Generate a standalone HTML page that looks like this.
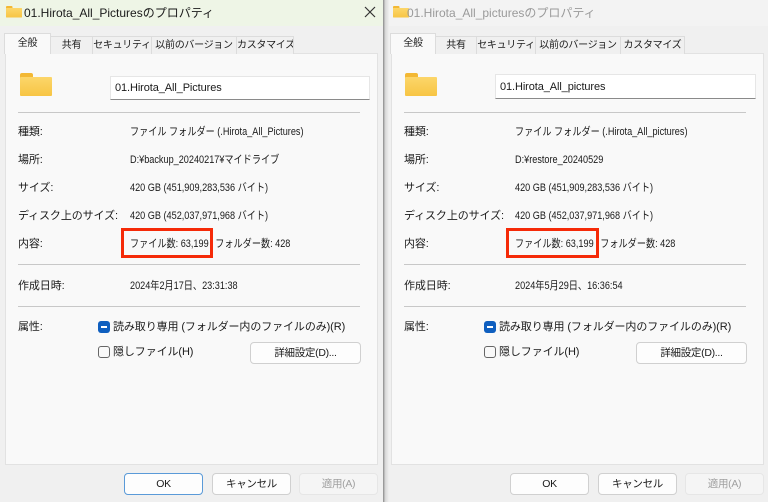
<!DOCTYPE html><html><head><meta charset="utf-8"><style>
*{box-sizing:border-box;margin:0;padding:0}
body{width:768px;height:502px;overflow:hidden;background:#f0f0f0;position:relative;font-family:"Liberation Sans","Noto Sans CJK JP",sans-serif;font-size:10px;letter-spacing:-0.3px;color:#1a1a1a}
.win{position:absolute;top:0;height:502px;background:#f0f0f0;overflow:hidden}
.a{position:absolute;white-space:nowrap;line-height:14px}
.l{font-size:11px;letter-spacing:-0.1px}
.v{font-size:11px;letter-spacing:0;transform:scaleX(0.83);transform-origin:0 0}
.title{position:absolute;left:0;top:0;right:0;height:26px}
.tab{position:absolute;top:36px;height:18px;border:1px solid #dcdcdc;border-bottom:none;background:#f0f0f0;text-align:center;line-height:17px;font-size:10px;white-space:nowrap;overflow:hidden;letter-spacing:-0.3px}
.tab.act{top:33px;height:21px;background:#f9f9f9;z-index:2;line-height:20px}
.panel{position:absolute;left:5px;top:53px;width:373px;height:412px;background:#f9f9f9;border:1px solid #e2e2e2}
.sep{position:absolute;left:18px;width:342px;height:1px;background:#c8c8c8}
.btn{position:absolute;height:22px;border:1px solid #d0d0d0;border-radius:4px;background:#fdfdfd;text-align:center;line-height:20px;font-size:10.5px;white-space:nowrap}
.fold{position:absolute;width:32px;height:22px}
.fold i{position:absolute;left:0;top:0;width:13px;height:5px;background:#f3b834;border-radius:2px 2px 0 0}
.fold b{position:absolute;left:0;top:4px;width:32px;height:19px;background:linear-gradient(#fcd66a,#f7c544);border-radius:1px}
.red{position:absolute;border:3px solid #f52a08;height:30px;top:228px}
.cb{position:absolute;width:12px;height:12px;border-radius:3px}
.tt{position:absolute;top:5px;font-size:12px;letter-spacing:0;line-height:16px;white-space:nowrap}
.g{display:inline-block;width:8px}
</style></head><body>

<!-- right window (behind) -->
<div class="win" style="left:385px;width:383px;background:#f0f0f0">
 <div class="title" style="background:#f3f3f3"></div>
 <div class="fold" style="left:8px;top:6px;transform:scale(.5);transform-origin:0 0"><i></i><b></b></div>
 <div class="tt" style="left:22px;color:#9a9a9a">01.Hirota_All_picturesのプロパティ</div>
 <div class="panel" style="left:6px"></div>
 <div class="tab act" style="left:5px;width:46px">全般</div>
 <div class="tab" style="left:50px;width:42px">共有</div>
 <div class="tab" style="left:91px;width:60px">セキュリティ</div>
 <div class="tab" style="left:150px;width:86px">以前のバージョン</div>
 <div class="tab" style="left:235px;width:65px">カスタマイズ</div>
 <div class="fold" style="left:20px;top:73px"><i></i><b></b></div>
 <div class="a l" style="left:110px;top:74px;width:261px;height:25px;background:#fff;border:1px solid #e6e6e6;border-bottom:1px solid #8a8a8a;padding:5px 4px;line-height:14px">01.Hirota_All_pictures</div>
 <div class="sep" style="top:112px;left:19px"></div>
 <div class="a l" style="left:19px;top:125px">種類:</div><div class="a v" style="left:130px;top:125px">ファイル フォルダー (.Hirota_All_pictures)</div>
 <div class="a l" style="left:19px;top:153px">場所:</div><div class="a v" style="left:130px;top:153px">D:¥restore_20240529</div>
 <div class="a l" style="left:19px;top:181px">サイズ:</div><div class="a v" style="left:130px;top:181px">420 GB (451,909,283,536 バイト)</div>
 <div class="a l" style="left:19px;top:209px">ディスク上のサイズ:</div><div class="a v" style="left:130px;top:209px">420 GB (452,037,971,968 バイト)</div>
 <div class="a l" style="left:19px;top:237px">内容:</div><div class="a v" style="left:130px;top:237px">ファイル数: 63,199<span class="g"></span>フォルダー数: 428</div>
 <div class="red" style="left:121px;width:93px"></div>
 <div class="sep" style="top:264px;left:19px"></div>
 <div class="a l" style="left:19px;top:279px">作成日時:</div><div class="a v" style="left:130px;top:279px">2024年5月29日、16:36:54</div>
 <div class="sep" style="top:306px;left:19px"></div>
 <div class="a l" style="left:19px;top:320px">属性:</div>
 <div class="cb" style="left:99px;top:321px;background:#0f5fbf"><div style="position:absolute;left:3px;top:5px;width:6px;height:2px;background:#fff"></div></div>
 <div class="a l" style="left:114px;top:320px">読み取り専用 (フォルダー内のファイルのみ)(R)</div>
 <div class="cb" style="left:99px;top:346px;border:1px solid #666"></div>
 <div class="a l" style="left:114px;top:345px">隠しファイル(H)</div>
 <div class="btn" style="left:251px;top:342px;width:111px">詳細設定(D)...</div>
 <div class="btn" style="left:125px;top:473px;width:79px">OK</div>
 <div class="btn" style="left:213px;top:473px;width:79px">キャンセル</div>
 <div class="btn" style="left:300px;top:473px;width:79px;color:#a0a0a0;border-color:#e6e6e6;background:#f5f5f5">適用(A)</div>
</div>

<!-- shadow -->
<div style="position:absolute;left:383px;top:0;width:6px;height:502px;background:linear-gradient(90deg,#8e8e8e,#d9d9d9 40%,#f0f0f0)"></div>

<!-- left window (front) -->
<div class="win" style="left:0;width:384px;border-right:1px solid #9a9a9a">
 <div class="title" style="background:#eef5e6"></div>
 <div class="fold" style="left:6px;top:6px;transform:scale(.5);transform-origin:0 0"><i></i><b></b></div>
 <div class="tt" style="left:24px;color:#1a1a1a">01.Hirota_All_Picturesのプロパティ</div>
 <svg style="position:absolute;left:364px;top:6px" width="12" height="12" viewBox="0 0 12 12"><path d="M1 1L11 11M11 1L1 11" stroke="#333" stroke-width="1.2"/></svg>
 <div class="panel"></div>
 <div class="tab act" style="left:4px;width:47px">全般</div>
 <div class="tab" style="left:50px;width:43px">共有</div>
 <div class="tab" style="left:92px;width:60px">セキュリティ</div>
 <div class="tab" style="left:151px;width:86px">以前のバージョン</div>
 <div class="tab" style="left:236px;width:58px">カスタマイズ</div>
 <div class="fold" style="left:20px;top:73px"><i></i><b></b></div>
 <div class="a l" style="left:110px;top:76px;width:260px;height:24px;background:#fff;border:1px solid #e6e6e6;border-bottom:1px solid #8a8a8a;padding:4px 4px;line-height:14px">01.Hirota_All_Pictures</div>
 <div class="sep" style="top:112px"></div>
 <div class="a l" style="left:18px;top:125px">種類:</div><div class="a v" style="left:130px;top:125px">ファイル フォルダー (.Hirota_All_Pictures)</div>
 <div class="a l" style="left:18px;top:153px">場所:</div><div class="a v" style="left:130px;top:153px">D:¥backup_20240217¥マイドライブ</div>
 <div class="a l" style="left:18px;top:181px">サイズ:</div><div class="a v" style="left:130px;top:181px">420 GB (451,909,283,536 バイト)</div>
 <div class="a l" style="left:18px;top:209px">ディスク上のサイズ:</div><div class="a v" style="left:130px;top:209px">420 GB (452,037,971,968 バイト)</div>
 <div class="a l" style="left:18px;top:237px">内容:</div><div class="a v" style="left:130px;top:237px">ファイル数: 63,199<span class="g"></span>フォルダー数: 428</div>
 <div class="red" style="left:121px;width:92px"></div>
 <div class="sep" style="top:264px"></div>
 <div class="a l" style="left:18px;top:279px">作成日時:</div><div class="a v" style="left:130px;top:279px">2024年2月17日、23:31:38</div>
 <div class="sep" style="top:306px"></div>
 <div class="a l" style="left:18px;top:320px">属性:</div>
 <div class="cb" style="left:98px;top:321px;background:#0f5fbf"><div style="position:absolute;left:3px;top:5px;width:6px;height:2px;background:#fff"></div></div>
 <div class="a l" style="left:113px;top:320px">読み取り専用 (フォルダー内のファイルのみ)(R)</div>
 <div class="cb" style="left:98px;top:346px;border:1px solid #666"></div>
 <div class="a l" style="left:113px;top:345px">隠しファイル(H)</div>
 <div class="btn" style="left:250px;top:342px;width:111px">詳細設定(D)...</div>
 <div class="btn" style="left:124px;top:473px;width:79px;border:1px solid #5a9ad8">OK</div>
 <div class="btn" style="left:212px;top:473px;width:79px">キャンセル</div>
 <div class="btn" style="left:299px;top:473px;width:79px;color:#a0a0a0;border-color:#e6e6e6;background:#f5f5f5">適用(A)</div>
</div>
</body></html>
